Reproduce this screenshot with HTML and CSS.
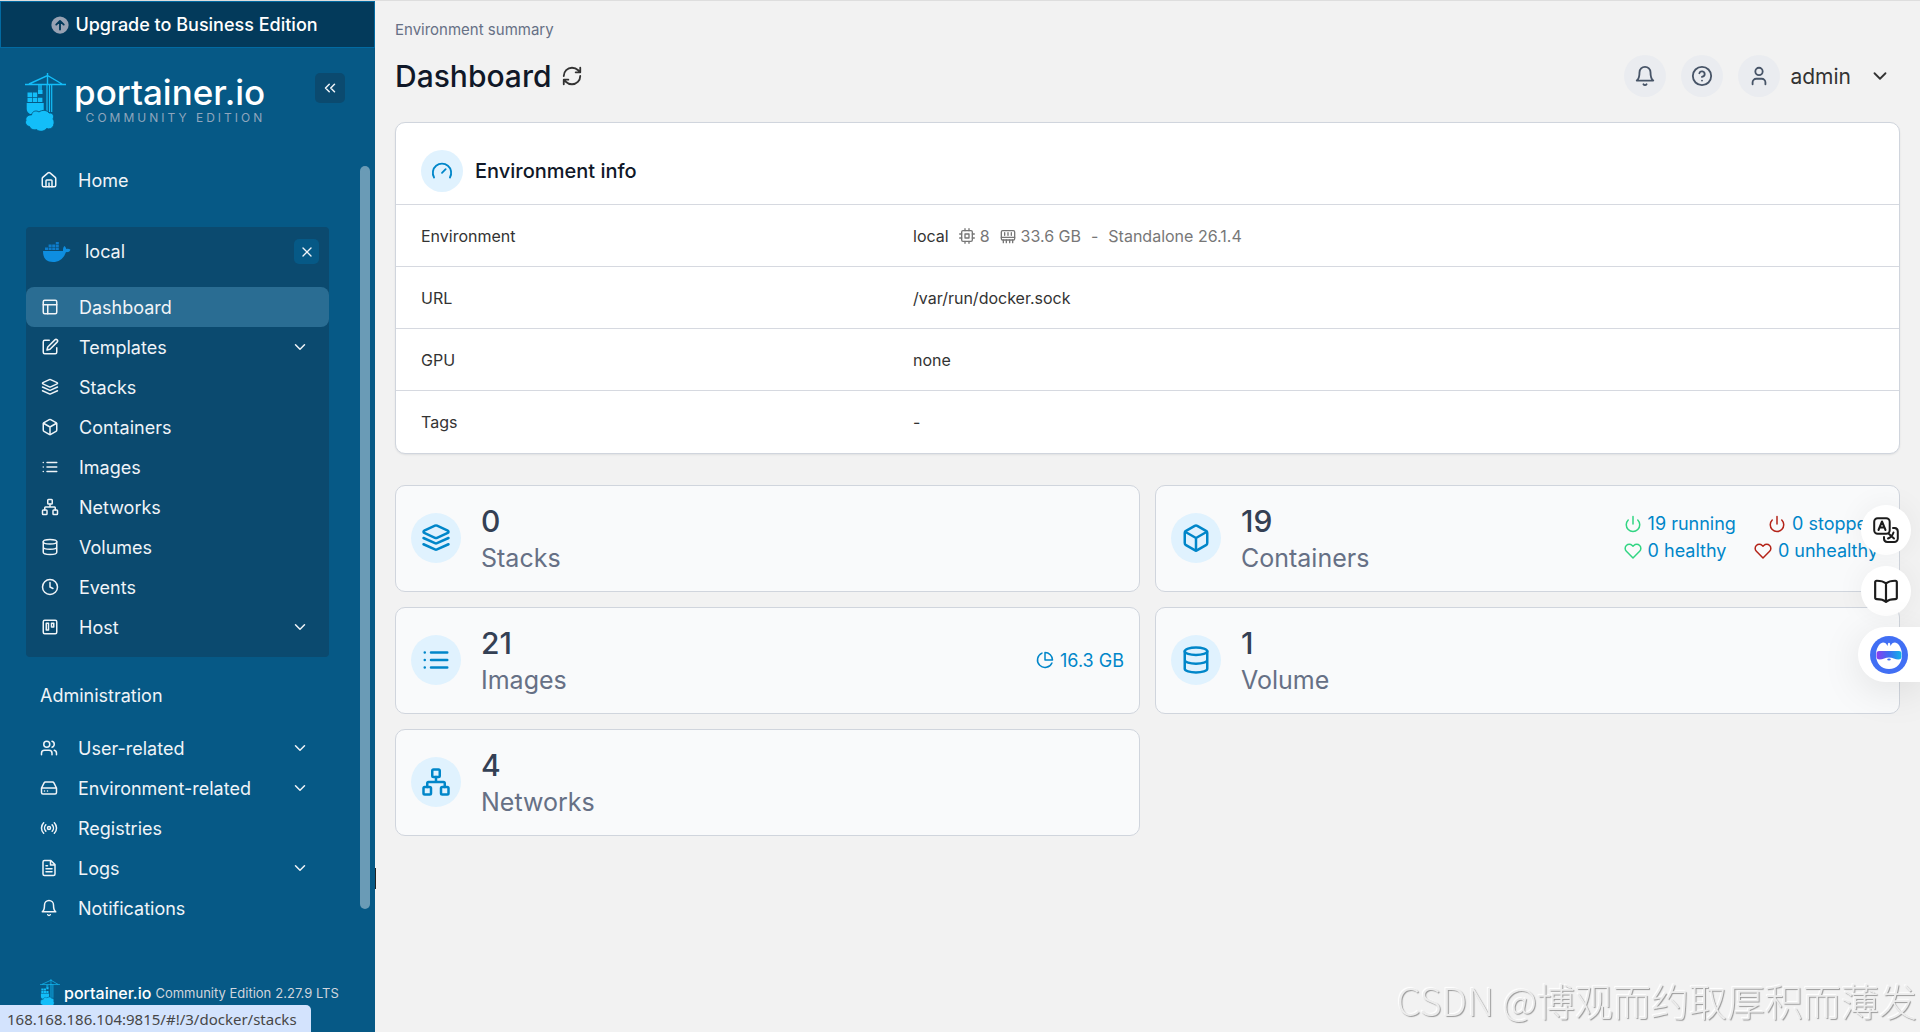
FILE: index.html
```html
<!DOCTYPE html>
<html lang="en">

<head>
    <meta charset="UTF-8">
    <title>Portainer</title>
    <link rel="stylesheet" href="styles.css">
</head>

<body>
    <!-- icon sprite -->
    <svg class="sprite" aria-hidden="true">
        <symbol id="crane" viewBox="0 0 41 58">
            <path d="M0 11.500h41M4 11l18.500-8.500L37 11M22.500 0v12M16 12v6M14 12v6" fill="none" stroke="#13bef9" stroke-width="1.400"/>
            <path d="M22 11v28M24.500 11v28M26.700 11v28" fill="none" stroke="#13bef9" stroke-width="1.200"/>
            <path d="M13 17h4.500v4H13zM2.500 19.500h4.500V24H2.500zM7.700 19.500h4.500V24H7.700zM2.500 24.700h4.500V29H2.500zM7.700 24.700h4.500V29H7.700zM12.900 24.700h4.500V29h-4.500zM1.700 30h17v8c-3 0-5 1-7 3H5c-2-1-3.300-3-3.300-5z" fill="#13bef9"/>
            <path d="M6.500 42c.5-4 5-5 7.500-3 3-2.500 8.500-2 10 1 4-.5 5.500 3 4 6 1.500 2 1.300 4 .5 6.500-1 3-4 4-7 3-2.500 3.500-7.500 3.500-10 1-3 1-6-.5-7-3-3-.5-5-3.500-3.500-6-1-3 2-6 5.500-5.500z" fill="#13bef9" stroke="#065986" stroke-width=".9"/>
        </symbol>
        <symbol id="whale" viewBox="0 0 28 20">
            <path d="M0 9h20c0-2 0-4 1.500-5 1.200.8 1.500 2 1.700 3 1.500-.5 3-.3 4.300.7-.7 2-2.500 2.600-4.500 2.400C20.500 17 16 20 10 20 3 20 0 16 0 9z" fill="#0e8ee0"/>
            <path d="M2 5.500h3V8H2zM5.600 5.500h3V8h-3zM9.200 5.500h3V8h-3zM12.800 5.500h3V8h-3zM5.600 2.500h3V5h-3zM9.200 2.500h3V5h-3zM12.800 2.500h3V5h-3zM12.800 0h3v2h-3z" fill="#0e7ccb"/>
        </symbol>
        <symbol id="up" viewBox="0 0 24 24"><circle cx="12" cy="12" r="11.500" fill="#98a2b3" stroke="none"/><path d="M12 18V7M7 11.500l5-5 5 5" stroke="#03395a" stroke-width="2.500"/></symbol>
        <symbol id="collapse" viewBox="0 0 24 24"><path d="m11 17-5-5 5-5M18 17l-5-5 5-5"/></symbol>
        <symbol id="home" viewBox="0 0 24 24"><path d="M8 21v-8a1 1 0 0 1 1-1h6a1 1 0 0 1 1 1v8M12 16v5"/><path d="M3 10a2 2 0 0 1 .7-1.500l7-6a2 2 0 0 1 2.600 0l7 6A2 2 0 0 1 21 10v9a2 2 0 0 1-2 2H5a2 2 0 0 1-2-2z"/></symbol>
        <symbol id="close" viewBox="0 0 24 24"><path d="M18 6 6 18M6 6l12 12"/></symbol>
        <symbol id="layout" viewBox="0 0 24 24"><rect x="3" y="3" width="18" height="18" rx="2"/><path d="M3 9h18M9 21V9"/></symbol>
        <symbol id="edit" viewBox="0 0 24 24"><path d="M11 3H5a2 2 0 0 0-2 2v14a2 2 0 0 0 2 2h14a2 2 0 0 0 2-2v-6"/><path d="M18.500 2.500a2.100 2.100 0 0 1 3 3L12 15l-4 1 1-4z"/></symbol>
        <symbol id="layers" viewBox="0 0 24 24"><path d="m12.830 2.180a2 2 0 0 0-1.660 0L2.600 6.080a1 1 0 0 0 0 1.830l8.580 3.910a2 2 0 0 0 1.660 0l8.580-3.900a1 1 0 0 0 0-1.830z"/><path d="m22 12-9.170 4.160a2 2 0 0 1-1.660 0L2 12M22 17l-9.170 4.160a2 2 0 0 1-1.660 0L2 17"/></symbol>
        <symbol id="box" viewBox="0 0 24 24"><path d="M21 8a2 2 0 0 0-1-1.730l-7-4a2 2 0 0 0-2 0l-7 4A2 2 0 0 0 3 8v8a2 2 0 0 0 1 1.730l7 4a2 2 0 0 0 2 0l7-4A2 2 0 0 0 21 16z"/><path d="m3.300 7 8.700 5 8.700-5M12 22V12"/></symbol>
        <symbol id="list" viewBox="0 0 24 24"><path d="M8 6h13M8 12h13M8 18h13M3 6h.01M3 12h.01M3 18h.01"/></symbol>
        <symbol id="network" viewBox="0 0 24 24"><rect x="16" y="16" width="6" height="6" rx="1"/><rect x="2" y="16" width="6" height="6" rx="1"/><rect x="9" y="2" width="6" height="6" rx="1"/><path d="M5 16v-3a1 1 0 0 1 1-1h12a1 1 0 0 1 1 1v3M12 12V8"/></symbol>
        <symbol id="database" viewBox="0 0 24 24"><ellipse cx="12" cy="5" rx="9" ry="3"/><path d="M3 5v14a9 3 0 0 0 18 0V5M3 12a9 3 0 0 0 18 0"/></symbol>
        <symbol id="clock" viewBox="0 0 24 24"><circle cx="12" cy="12" r="10"/><path d="M12 6v6l4 2"/></symbol>
        <symbol id="host" viewBox="0 0 24 24"><rect x="3" y="3" width="18" height="18" rx="2"/><path d="M7 7h3v9H7zM14 7h3v5h-3z"/></symbol>
        <symbol id="users" viewBox="0 0 24 24"><path d="M16 21v-2a4 4 0 0 0-4-4H6a4 4 0 0 0-4 4v2"/><circle cx="9" cy="7" r="4"/><path d="M22 21v-2a4 4 0 0 0-3-3.870M16 3.130a4 4 0 0 1 0 7.750"/></symbol>
        <symbol id="drive" viewBox="0 0 24 24"><path d="M22 12H2M5.450 5.110 2 12v6a2 2 0 0 0 2 2h16a2 2 0 0 0 2-2v-6l-3.450-6.890A2 2 0 0 0 16.760 4H7.240a2 2 0 0 0-1.790 1.110zM6 16h.01M10 16h.01"/></symbol>
        <symbol id="radio" viewBox="0 0 24 24"><path d="M4.900 19.100C1 15.200 1 8.800 4.900 4.900M7.800 16.200c-2.300-2.300-2.300-6.100 0-8.500M16.200 7.800c2.300 2.300 2.300 6.100 0 8.500M19.100 4.900C23 8.800 23 15.100 19.100 19"/><circle cx="12" cy="12" r="2"/></symbol>
        <symbol id="file" viewBox="0 0 24 24"><path d="M14.500 2H6a2 2 0 0 0-2 2v16a2 2 0 0 0 2 2h12a2 2 0 0 0 2-2V7.500zM14 2v6h6M16 13H8M16 17H8M10 9H8"/></symbol>
        <symbol id="bell" viewBox="0 0 24 24"><path d="M6 8a6 6 0 0 1 12 0c0 7 3 9 3 9H3s3-2 3-9M10.300 21a1.940 1.940 0 0 0 3.400 0"/></symbol>
        <symbol id="down" viewBox="0 0 24 24"><path d="m6 9 6 6 6-6"/></symbol>
        <symbol id="refresh" viewBox="0 0 24 24"><path d="M3 12a9 9 0 0 1 9-9 9.750 9.750 0 0 1 6.740 2.740L21 8M21 3v5h-5M21 12a9 9 0 0 1-9 9 9.750 9.750 0 0 1-6.740-2.740L3 16M8 16H3v5"/></symbol>
        <symbol id="help" viewBox="0 0 24 24"><circle cx="12" cy="12" r="10"/><path d="M9.090 9a3 3 0 0 1 5.830 1c0 2-3 3-3 3M12 17h.01"/></symbol>
        <symbol id="user" viewBox="0 0 24 24"><path d="M19 21v-2a4 4 0 0 0-4-4H9a4 4 0 0 0-4 4v2"/><circle cx="12" cy="7" r="4"/></symbol>
        <symbol id="gauge" viewBox="0 0 24 24"><path d="m12 14 4-4M3.340 19a10 10 0 1 1 17.320 0"/></symbol>
        <symbol id="cpu" viewBox="0 0 24 24"><rect x="4" y="4" width="16" height="16" rx="2"/><path d="M9 9h6v6H9zM9 1v3M15 1v3M9 20v3M15 20v3M20 9h3M20 15h3M1 9h3M1 15h3"/></symbol>
        <symbol id="memory" viewBox="0 0 24 24"><rect x="2" y="4" width="20" height="14" rx="2"/><path d="M2 14h20M7 7v4M12 7v4M17 7v4M5 18v4M9.500 18v4M14.500 18v4M19 18v4"/></symbol>
        <symbol id="power" viewBox="0 0 24 24"><path d="M18.360 6.640a9 9 0 1 1-12.730 0M12 2v10"/></symbol>
        <symbol id="heart" viewBox="0 0 24 24"><path d="M20.840 4.610a5.500 5.500 0 0 0-7.780 0L12 5.670l-1.060-1.060a5.500 5.500 0 0 0-7.780 7.780L12 21.230l8.840-8.840a5.500 5.500 0 0 0 0-7.780z"/></symbol>
        <symbol id="pie" viewBox="0 0 24 24"><path d="M21.210 15.890A10 10 0 1 1 8 2.830M22 12A10 10 0 0 0 12 2v10z"/></symbol>
        <symbol id="translate" viewBox="0 0 26 26"><rect x="1.200" y="1.200" width="15.500" height="15.500" rx="3.500"/><path d="m5.500 13 3.500-8.500 3.500 8.500M6.800 10.500h4.400M20 11h1.500a3.500 3.500 0 0 1 3.300 3.500v7a3.500 3.500 0 0 1-3.500 3.500h-7A3.500 3.500 0 0 1 11 21.500V20M15 21.500c3-1 4.500-3 5.500-6M16 17l5 4.500"/></symbol>
        <symbol id="book" viewBox="0 0 24 24"><path d="M12 5v17M12 5c-2-1.700-5-2.500-8.500-2.500a1.500 1.500 0 0 0-1.500 1.500v14a1.500 1.500 0 0 0 1.500 1.500c3.500 0 6.500.8 8.500 2.500 2-1.700 5-2.500 8.500-2.500A1.500 1.500 0 0 0 22 18V4a1.500 1.500 0 0 0-1.500-1.500C17 2.500 14 3.300 12 5z"/></symbol>
    </svg>

    <div class="app">
        <aside class="sidebar">
            <button class="upgrade"><svg class="icon"><use href="#up"/></svg>Upgrade to Business Edition</button>
            <div class="brand">
                <svg class="crane"><use href="#crane"/></svg>
                <div class="brand-text">
                    <span class="brand-name">portainer.io</span>
                    <span class="brand-edition">COMMUNITY EDITION</span>
                </div>
                <button class="collapse" aria-label="Collapse"><svg class="icon"><use href="#collapse"/></svg></button>
            </div>
            <nav class="nav">
                <a class="item" href="#"><svg class="icon"><use href="#home"/></svg>Home</a>
                <div class="env">
                    <div class="env-head">
                        <svg class="whale"><use href="#whale"/></svg>
                        <span>local</span>
                        <button class="env-close" aria-label="Close"><svg class="icon"><use href="#close"/></svg></button>
                    </div>
                    <a class="item active" href="#"><svg class="icon"><use href="#layout"/></svg>Dashboard</a>
                    <a class="item" href="#"><svg class="icon"><use href="#edit"/></svg>Templates<svg class="icon arrow"><use href="#down"/></svg></a>
                    <a class="item" href="#"><svg class="icon"><use href="#layers"/></svg>Stacks</a>
                    <a class="item" href="#"><svg class="icon"><use href="#box"/></svg>Containers</a>
                    <a class="item" href="#"><svg class="icon"><use href="#list"/></svg>Images</a>
                    <a class="item" href="#"><svg class="icon"><use href="#network"/></svg>Networks</a>
                    <a class="item" href="#"><svg class="icon"><use href="#database"/></svg>Volumes</a>
                    <a class="item" href="#"><svg class="icon"><use href="#clock"/></svg>Events</a>
                    <a class="item" href="#"><svg class="icon"><use href="#host"/></svg>Host<svg class="icon arrow"><use href="#down"/></svg></a>
                </div>
                <div class="section">Administration</div>
                <a class="item" href="#"><svg class="icon"><use href="#users"/></svg>User-related<svg class="icon arrow"><use href="#down"/></svg></a>
                <a class="item" href="#"><svg class="icon"><use href="#drive"/></svg>Environment-related<svg class="icon arrow"><use href="#down"/></svg></a>
                <a class="item" href="#"><svg class="icon"><use href="#radio"/></svg>Registries</a>
                <a class="item" href="#"><svg class="icon"><use href="#file"/></svg>Logs<svg class="icon arrow"><use href="#down"/></svg></a>
                <a class="item" href="#"><svg class="icon"><use href="#bell"/></svg>Notifications</a>
                <div class="scrollbar"></div>
            </nav>
            <footer class="footer">
                <svg class="crane"><use href="#crane"/></svg>
                <span class="footer-name">portainer.io</span>
                <span>Community Edition</span>
                <span>2.27.9 LTS</span>
            </footer>
        </aside>

        <main class="main">
            <header class="header">
                <div>
                    <div class="crumb">Environment summary</div>
                    <h1 class="title">Dashboard<button class="refresh" aria-label="Refresh"><svg class="icon"><use href="#refresh"/></svg></button></h1>
                </div>
                <div class="tools">
                    <button class="round" aria-label="Notifications"><svg class="icon"><use href="#bell"/></svg></button>
                    <button class="round" aria-label="Help"><svg class="icon"><use href="#help"/></svg></button>
                    <button class="user">
                        <span class="round"><svg class="icon"><use href="#user"/></svg></span>
                        admin
                        <svg class="icon arrow"><use href="#down"/></svg>
                    </button>
                </div>
            </header>

            <section class="widget">
                <h2 class="widget-head"><span class="badge"><svg class="icon"><use href="#gauge"/></svg></span>Environment info</h2>
                <table class="info">
                    <tr>
                        <th>Environment</th>
                        <td>
                            <div class="specs">
                                <span>local</span>
                                <span class="muted"><svg class="icon"><use href="#cpu"/></svg>8</span>
                                <span class="muted"><svg class="icon"><use href="#memory"/></svg>33.6 GB</span>
                                <span class="muted">-</span>
                                <span class="muted">Standalone 26.1.4</span>
                            </div>
                        </td>
                    </tr>
                    <tr><th>URL</th><td>/var/run/docker.sock</td></tr>
                    <tr><th>GPU</th><td>none</td></tr>
                    <tr><th>Tags</th><td>-</td></tr>
                </table>
            </section>

            <section class="cards">
                <a class="card" href="#">
                    <span class="card-icon"><svg class="icon"><use href="#layers"/></svg></span>
                    <span class="card-text"><span class="count">0</span><span class="label">Stacks</span></span>
                </a>
                <a class="card" href="#">
                    <span class="card-icon"><svg class="icon"><use href="#box"/></svg></span>
                    <span class="card-text"><span class="count">19</span><span class="label">Containers</span></span>
                    <span class="stats">
                        <span class="stat up"><svg class="icon"><use href="#power"/></svg>19 running</span>
                        <span class="stat stat-end down"><svg class="icon"><use href="#power"/></svg>0 stopped</span>
                        <span class="stat up"><svg class="icon"><use href="#heart"/></svg>0 healthy</span>
                        <span class="stat stat-end down"><svg class="icon"><use href="#heart"/></svg>0 unhealthy</span>
                    </span>
                </a>
                <a class="card" href="#">
                    <span class="card-icon"><svg class="icon"><use href="#list"/></svg></span>
                    <span class="card-text"><span class="count">21</span><span class="label">Images</span></span>
                    <span class="stat size"><svg class="icon"><use href="#pie"/></svg>16.3 GB</span>
                </a>
                <a class="card" href="#">
                    <span class="card-icon"><svg class="icon"><use href="#database"/></svg></span>
                    <span class="card-text"><span class="count">1</span><span class="label">Volume</span></span>
                </a>
                <a class="card" href="#">
                    <span class="card-icon"><svg class="icon"><use href="#network"/></svg></span>
                    <span class="card-text"><span class="count">4</span><span class="label">Networks</span></span>
                </a>
            </section>
        </main>
    </div>

    <div class="floating">
        <button class="float-btn" aria-label="Translate"><svg class="icon"><use href="#translate"/></svg></button>
        <button class="float-btn" aria-label="Read"><svg class="icon"><use href="#book"/></svg></button>
        <button class="float-tab" aria-label="Assistant">
            <svg class="bot" viewBox="0 0 38 38">
                <defs>
                    <linearGradient id="visor"><stop offset="0" stop-color="#8b3df0"/><stop offset=".5" stop-color="#3a6df2"/><stop offset="1" stop-color="#12b4e8"/></linearGradient>
                </defs>
                <circle cx="19" cy="19" r="19" fill="#416ff4"/>
                <path d="M6 19c0-6 3-12 7-12.500 2 0 3.500 1 4.500 3.500l.5-2.500c.3-1 1.700-1 2 0l.5 2.500c1-2.500 2.500-3.500 4.500-3.500 4 .5 7 6.500 7 12.500 0 8-5 14-13 14S6 27 6 19z" fill="#fff"/>
                <path d="M9 15h20a2.500 2.500 0 0 1 2.500 2.500v3c0 2-1 3-3 3-3.500 0-6-2-9.500-2s-6 2-9.500 2c-2 0-3-1-3-3v-3A2.500 2.500 0 0 1 9 15z" fill="url(#visor)"/>
                <ellipse cx="19" cy="23.500" rx="1.800" ry="1" fill="#416ff4"/>
            </svg>
        </button>
    </div>
    <div class="resize-mark"></div>
    <div class="status">168.168.186.104:9815/#!/3/docker/stacks</div>
    <div class="watermark">CSDN @博观而约取厚积而薄发</div>
</body>

</html>
```

FILE: styles.css
```css
* {
    box-sizing: border-box;
}

body {
    margin: 0;
    background: #f2f2f2;
    color: #333;
    font-family: Inter, "Liberation Sans", sans-serif;
    font-size: 16px;
    overflow: hidden;
}

button {
    border: 0;
    padding: 0;
    background: none;
    color: inherit;
    font: inherit;
    cursor: pointer;
}

a {
    color: inherit;
    text-decoration: none;
}

.sprite {
    position: absolute;
    width: 0;
    height: 0;
}

.icon {
    width: 18px;
    height: 18px;
    flex: none;
    fill: none;
    stroke: currentColor;
    stroke-width: 2;
    stroke-linecap: round;
    stroke-linejoin: round;
}

.crane {
    flex: none;
}

.app {
    display: flex;
    min-height: 100vh;
    border-top: 1px solid #dedede;
}

/* sidebar */
.sidebar {
    display: flex;
    flex-direction: column;
    flex: none;
    width: 375px;
    background: #065986;
    color: #f0f4f8;
    font-size: 18px;
}

.upgrade {
    display: flex;
    align-items: center;
    justify-content: center;
    gap: 6px;
    height: 47px;
    padding-right: 6px;
    border: 1px solid #026aa2;
    background: #033a5b;
    color: #fff;
    font-weight: 500;
}

.brand {
    display: flex;
    align-items: flex-start;
    gap: 8px;
    height: 112px;
    padding: 25px 30px 0 25px;
}

.brand .crane {
    width: 41px;
    height: 58px;
}

.brand-text {
    display: flex;
    flex-direction: column;
    align-items: flex-end;
}

.brand-name {
    color: #fff;
    font-size: 35px;
    font-weight: 500;
    line-height: 39px;
}

.brand-edition {
    color: #8fa6bd;
    font-size: 12px;
    line-height: 12px;
    letter-spacing: 3px;
}

.collapse {
    display: flex;
    align-items: center;
    justify-content: center;
    width: 30px;
    height: 30px;
    margin-left: auto;
    border-radius: 5px;
    background: #0b4a6f;
}

.nav {
    position: relative;
    padding: 0 46px 0 26px;
}

.item {
    display: flex;
    align-items: center;
    gap: 20px;
    height: 40px;
    padding: 0 20px 0 14px;
    border-radius: 8px;
}

.item .arrow {
    margin-left: auto;
}

.env {
    margin: 27px 0 22px;
    padding-bottom: 10px;
    border-radius: 4px;
    background: #0b4a6f;
}

.env .item {
    padding-left: 15px;
}

.env .active {
    background: #2a6d93;
}

.env-head {
    display: flex;
    align-items: center;
    gap: 14px;
    height: 60px;
    padding: 0 10px 11px 17px;
}

.whale {
    width: 28px;
    height: 20px;
}

.env-close {
    display: flex;
    align-items: center;
    justify-content: center;
    width: 25px;
    height: 25px;
    margin-left: auto;
    border-radius: 5px;
    background: #065986;
}

.env-close .icon {
    width: 16px;
    height: 16px;
}

.section {
    height: 49px;
    padding-left: 14px;
    line-height: 34px;
}

.scrollbar {
    position: absolute;
    top: 6px;
    right: 5px;
    bottom: 19px;
    width: 10px;
    border-radius: 5px;
    background: #6a9bb6;
}

.footer {
    display: flex;
    align-items: center;
    gap: 4px;
    margin-top: auto;
    padding: 0 0 25px 40px;
    color: #d0d5dd;
    font-size: 13px;
    white-space: nowrap;
}

.footer .crane {
    width: 20px;
    height: 28px;
}

.footer-name {
    color: #fff;
    font-size: 16px;
    font-weight: 500;
}

/* content */
.main {
    flex: 1;
    padding: 19px 20px;
}

.header {
    display: flex;
    align-items: flex-end;
    justify-content: space-between;
    margin-bottom: 25px;
}

.crumb {
    color: #667085;
    font-size: 15px;
    line-height: 20px;
}

.title {
    display: flex;
    align-items: center;
    gap: 10px;
    margin: 15px 0 0;
    color: #101828;
    font-size: 30px;
    font-weight: 500;
    line-height: 42px;
}

.refresh {
    display: flex;
    color: #333;
}

.refresh .icon {
    width: 22px;
    height: 22px;
}

.tools {
    display: flex;
    gap: 15px;
}

.round {
    display: flex;
    align-items: center;
    justify-content: center;
    width: 42px;
    height: 42px;
    border-radius: 50%;
    background: #eaecf0;
    color: #475467;
}

.round .icon {
    width: 22px;
    height: 22px;
}

.user {
    display: flex;
    align-items: center;
    gap: 10px;
    padding-right: 9px;
    font-size: 21px;
}

.user .arrow {
    width: 22px;
    height: 22px;
    margin-left: 8px;
}

.widget {
    border: 1px solid #d0d5dd;
    border-radius: 10px;
    background: #fff;
    box-shadow: 0 1px 2px rgba(16, 24, 40, .08);
}

.widget-head {
    display: flex;
    align-items: center;
    gap: 12px;
    height: 81px;
    margin: 0;
    padding: 14px 25px 0;
    color: #101828;
    font-size: 20px;
    font-weight: 500;
}

.badge,
.card-icon {
    display: flex;
    align-items: center;
    justify-content: center;
    flex: none;
    border-radius: 50%;
    background: #e0f2fe;
    color: #0086c9;
}

.badge {
    width: 42px;
    height: 42px;
}

.badge .icon {
    width: 22px;
    height: 22px;
}

.info {
    width: 100%;
    border-collapse: collapse;
    table-layout: fixed;
}

.info th,
.info td {
    height: 62px;
    padding: 0 6px;
    border-top: 1px solid #d6d9e0;
    text-align: left;
    font-weight: 400;
}

.info th {
    width: 34%;
    padding-left: 25px;
}

.specs {
    display: flex;
    align-items: center;
    gap: 10px;
}

.muted {
    display: flex;
    align-items: center;
    gap: 5px;
    color: #777;
}

.muted .icon {
    width: 16px;
    height: 16px;
}

.cards {
    display: grid;
    grid-template-columns: 1fr 1fr;
    gap: 15px;
    margin-top: 31px;
}

.card {
    display: flex;
    align-items: center;
    gap: 20px;
    height: 107px;
    padding: 0 15px;
    border: 1px solid #d0d5dd;
    border-radius: 10px;
    background: #f9fafb;
}

.card-icon {
    width: 50px;
    height: 50px;
}

.card-icon .icon {
    width: 30px;
    height: 30px;
}

.card-text {
    display: flex;
    flex-direction: column;
    padding-top: 3px;
}

.count {
    color: #344054;
    font-size: 30px;
    font-weight: 500;
    line-height: 37px;
}

.label {
    color: #667085;
    font-size: 25px;
    line-height: 37px;
}

.stats {
    display: grid;
    grid-template-columns: auto auto;
    gap: 0 18px;
    margin-left: auto;
    padding: 0 6px 2px 0;
}

.stat {
    display: flex;
    align-items: center;
    gap: 6px;
    color: #0086c9;
    font-size: 18px;
    line-height: 27px;
}

.stat-end {
    justify-content: flex-end;
}

.size {
    margin-left: auto;
}

.up .icon {
    color: #32d583;
}

.down .icon {
    color: #b42318;
}

/* widgets over the page */
.floating {
    position: fixed;
    top: 505px;
    right: 0;
    display: flex;
    flex-direction: column;
    align-items: flex-end;
    gap: 11px;
}

.float-btn {
    display: flex;
    align-items: center;
    justify-content: center;
    width: 50px;
    height: 50px;
    margin-right: 9px;
    border-radius: 50%;
    background: #fff;
    color: #1c1c1c;
    box-shadow: 0 0 30px rgba(0, 0, 0, .06);
}

.float-btn .icon {
    width: 26px;
    height: 26px;
}

.float-tab {
    display: flex;
    align-items: center;
    width: 62px;
    height: 55px;
    padding-left: 12px;
    border-radius: 28px 0 0 28px;
    background: #fff;
    box-shadow: 0 8px 40px rgba(0, 0, 0, .1);
}

.bot {
    width: 38px;
    height: 38px;
}

.resize-mark {
    position: fixed;
    left: 375px;
    top: 868px;
    width: 1px;
    height: 21px;
    background: #222;
}

.status {
    position: fixed;
    left: 0;
    bottom: 0;
    height: 27px;
    padding: 0 14px 0 7px;
    border-top-right-radius: 5px;
    background: #d3e3fd;
    color: #474747;
    font-family: "Noto Sans", sans-serif;
    font-size: 15px;
    line-height: 28px;
}

.watermark {
    position: fixed;
    right: 3px;
    bottom: 8px;
    color: #ececec;
    font-family: "Noto Sans CJK SC", sans-serif;
    font-size: 38px;
    font-weight: 300;
    line-height: 48px;
    text-shadow: 1px 1px 1px #999, -1px -1px 1px #fff;
}
```
